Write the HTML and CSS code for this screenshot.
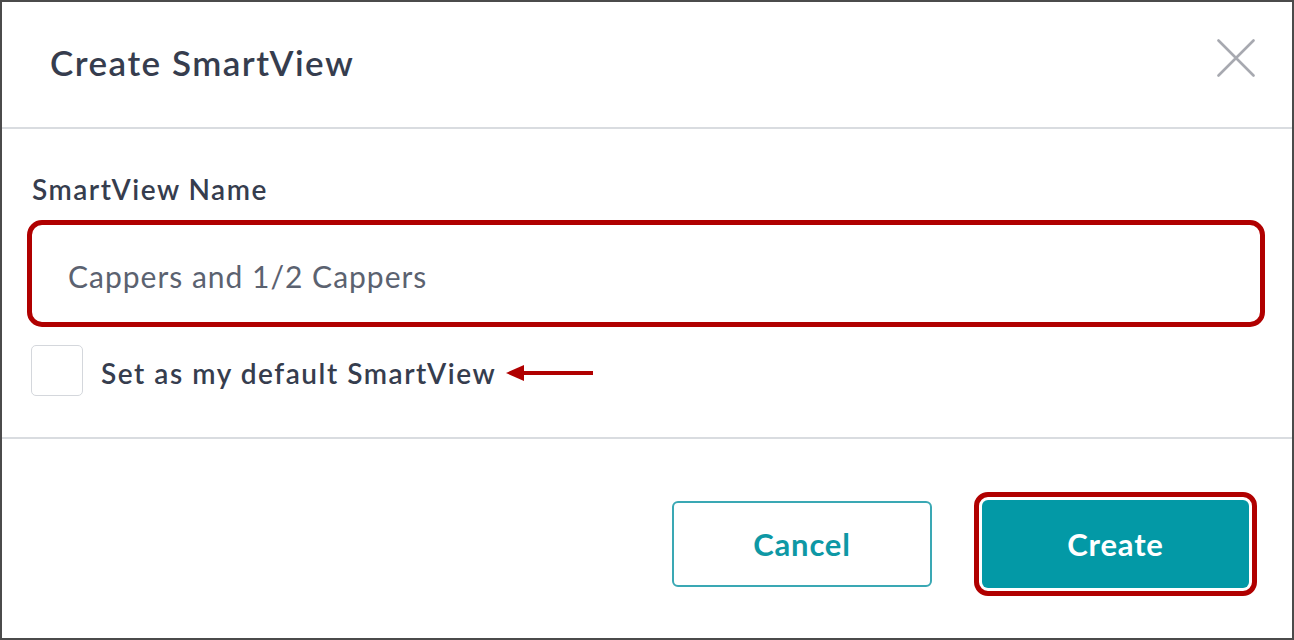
FILE: index.html
```html
<!DOCTYPE html>
<html lang="en">
<head>
<meta charset="utf-8">
<title>Create SmartView</title>
<link rel="stylesheet" href="styles.css">
</head>
<body>
<div class="frame">
  <header class="modal-header">
    <h1 class="modal-title">Create SmartView</h1>
    <button class="close-btn" aria-label="Close">
      <svg width="38" height="38" viewBox="0 0 38 38"><path d="M1.5 1.5 L36.5 36.5 M36.5 1.5 L1.5 36.5" stroke="#a7a9b0" stroke-width="2.6" stroke-linecap="round" fill="none"/></svg>
    </button>
  </header>
  <section class="modal-body">
    <label class="field-label">SmartView Name</label>
    <div class="input-box">Cappers and 1/2 Cappers</div>
    <div class="check-row">
      <span class="checkbox"></span>
      <span class="check-label">Set as my default SmartView</span>
      <svg class="arrow" width="90" height="18" viewBox="0 0 90 18"><path d="M1 9 L19 1 L19 17 Z" fill="#b00000"/><rect x="17" y="7" width="71" height="4" fill="#b00000"/></svg>
    </div>
  </section>
  <footer class="modal-footer">
    <button class="btn btn-cancel">Cancel</button>
    <div class="highlight">
      <button class="btn btn-create">Create</button>
    </div>
  </footer>
</div>
</body>
</html>
```

FILE: styles.css
```css
html, body {
  margin: 0;
  padding: 0;
  background: #ffffff;
}
body {
  font-family: "Lato", "Noto Sans", sans-serif;
  color: #343b4c;
}
.frame {
  width: 1294px;
  height: 640px;
  box-sizing: border-box;
  border: 2px solid #4b4b4b;
  display: flex;
  flex-direction: column;
  background: #fff;
}
.modal-header {
  height: 125px;
  flex: none;
  border-bottom: 2px solid #d9dce0;
  display: flex;
  align-items: center;
  justify-content: space-between;
  padding: 0 37px 0 48px;
}
.modal-title {
  margin: 0;
  font-size: 35px;
  font-weight: 600;
  color: #363d4e;
  letter-spacing: 1.5px;
  padding-bottom: 6px;
}
.close-btn {
  border: none;
  background: none;
  padding: 0;
  width: 38px;
  height: 38px;
  display: flex;
  margin-bottom: 14px;
}
.modal-body {
  height: 310px;
  flex: none;
  border-bottom: 2px solid #d9dce0;
  padding: 44px 27px 0 25px;
  box-sizing: border-box;
  display: flex;
  flex-direction: column;
}
.field-label {
  font-size: 28px;
  font-weight: 600;
  color: #363d4e;
  line-height: 32px;
  padding-left: 5px;
  letter-spacing: 1.5px;
}
.input-box {
  margin-top: 15px;
  height: 107px;
  box-sizing: border-box;
  border: 5px solid #b00000;
  border-radius: 15px;
  display: flex;
  align-items: center;
  padding: 5px 0 0 36px;
  font-size: 30px;
  color: #5b6270;
  letter-spacing: 1px;
}
.check-row {
  margin-top: 18px;
  display: flex;
  align-items: center;
  padding-left: 4px;
}
.checkbox {
  width: 52px;
  height: 51px;
  box-sizing: border-box;
  border: 1.5px solid #d4d7dc;
  border-radius: 5px;
  flex: none;
}
.check-label {
  margin-left: 18px;
  padding-top: 4px;
  font-size: 28px;
  font-weight: 600;
  color: #363d4e;
  letter-spacing: 1.55px;
}
.arrow {
  margin-left: 9px;
  margin-top: 5px;
}
.modal-footer {
  flex: 1;
  display: flex;
  justify-content: flex-end;
  align-items: center;
  padding: 10px 35px 0 0;
  gap: 42px;
}
.btn {
  font-family: "Lato", "Noto Sans", sans-serif;
  font-size: 31px;
  font-weight: 700;
  border-radius: 6px;
  letter-spacing: 0.8px;
  cursor: pointer;
}
.btn-cancel {
  width: 260px;
  height: 86px;
  background: #fff;
  border: 2px solid #3aa8b4;
  color: #0e98a5;
}
.highlight {
  border: 5px solid #b00000;
  border-radius: 14px;
  padding: 3px;
  background: #fff;
}
.btn-create {
  display: block;
  width: 267px;
  height: 88px;
  background: #0399a6;
  border: none;
  color: #fff;
}
```
